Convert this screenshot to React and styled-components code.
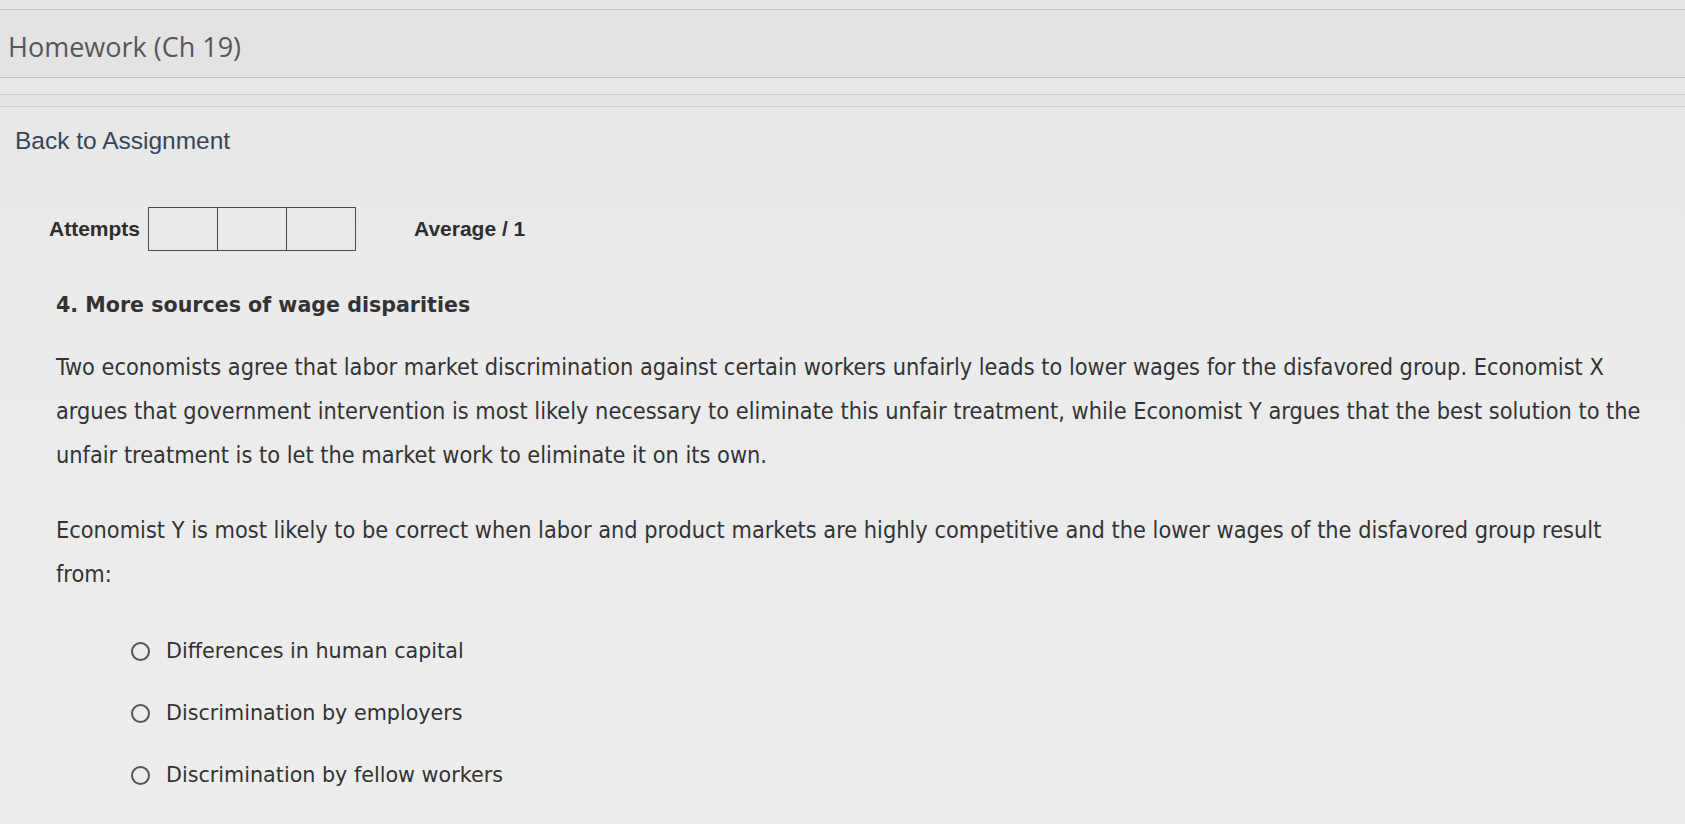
import React from "react";
import styled, { createGlobalStyle } from "styled-components";

const Global = createGlobalStyle`
  html, body { margin: 0; padding: 0; }
  body { background: #eaeaea; width: 1685px; height: 824px; overflow: hidden; }
`;

const Page = styled.div`
  width: 1685px;
  height: 824px;
  background: linear-gradient(180deg, #e6e6e6 0%, #ebebeb 40%, #ededed 100%);
  padding-top: 9px;
  box-sizing: border-box;
`;

const Header = styled.header`
  height: 69px;
  border-top: 1px solid #c9c9c9;
  border-bottom: 1px solid #c4c4c4;
  background: #e3e3e3;
  display: flex;
  align-items: center;
  padding: 6px 0 0 8px;
  box-sizing: border-box;
  font-family: "Open Sans", "Noto Sans", sans-serif;
  font-size: 27px;
  color: #575757;
`;

const Rule = styled.div`
  height: 0;
  border-top: 1px solid #cdcdcd;
  margin-top: ${(p) => p.$gap}px;
`;

const Band = styled.div`
  height: 11px;
  background: #e4e4e4;
`;

const Content = styled.main`
  padding: 19px 0 0 15px;
`;

const BackLink = styled.a`
  display: block;
  font-family: "Liberation Sans", Arial, sans-serif;
  font-size: 24.5px;
  line-height: 30px;
  color: #34475a;
  text-decoration: none;
`;

const AttemptsRow = styled.div`
  display: flex;
  align-items: center;
  margin: 51px 0 0 34px;
  font-family: "Liberation Sans", Arial, sans-serif;
  font-weight: bold;
  font-size: 21px;
  color: #2e2e2e;
`;

const Boxes = styled.div`
  display: flex;
  margin-left: 8px;
  border: 1px solid #4a4a4a;
`;

const Cell = styled.div`
  width: 68px;
  height: 42px;
  border-left: ${(p) => (p.$first ? "none" : "1px solid #4a4a4a")};
`;

const Average = styled.span`
  margin-left: 58px;
`;

const Question = styled.section`
  margin: 41px 0 0 41px;
  color: #333;
`;

const Title = styled.h2`
  margin: 0;
  font-family: "DejaVu Sans", Verdana, sans-serif;
  font-weight: bold;
  font-size: 20.6px;
  line-height: 26px;
  color: #333;
`;

const Para = styled.p`
  margin: ${(p) => p.$top}px 0 0 0;
  width: 1595px;
  font-family: "DejaVu Sans Condensed", "DejaVu Sans", sans-serif;
  font-stretch: condensed;
  font-size: 23.3px;
  line-height: 44px;
  color: #333;
`;

const Options = styled.div`
  margin: 44px 0 0 116px;
  display: flex;
  flex-direction: column;
  gap: 40px;
`;

const Option = styled.label`
  display: flex;
  align-items: center;
  font-family: "DejaVu Sans", Verdana, sans-serif;
  font-size: 20.7px;
  line-height: 22px;
  color: #333;
`;

const Radio = styled.span`
  width: 15px;
  height: 15px;
  border: 2px solid #555;
  border-radius: 50%;
  margin-right: 16px;
  flex: none;
`;

export default function App() {
  const options = [
    "Differences in human capital",
    "Discrimination by employers",
    "Discrimination by fellow workers",
  ];
  return (
    <>
      <Global />
      <Page>
        <Header>Homework (Ch 19)</Header>
        <Rule $gap={16} />
        <Band />
        <Rule $gap={0} />
        <Content>
          <BackLink href="#">Back to Assignment</BackLink>
          <AttemptsRow>
            Attempts
            <Boxes>
              <Cell $first />
              <Cell />
              <Cell />
            </Boxes>
            <Average>Average / 1</Average>
          </AttemptsRow>
          <Question>
            <Title>4. More sources of wage disparities</Title>
            <Para $top={27}>
              Two economists agree that labor market discrimination against certain workers unfairly leads to lower wages for the disfavored group. Economist X argues that government intervention is most likely necessary to eliminate this unfair treatment, while Economist Y argues that the best solution to the unfair treatment is to let the market work to eliminate it on its own.
            </Para>
            <Para $top={31}>
              Economist Y is most likely to be correct when labor and product markets are highly competitive and the lower wages of the disfavored group result from:
            </Para>
          </Question>
          <Options>
            {options.map((o) => (
              <Option key={o}>
                <Radio />
                {o}
              </Option>
            ))}
          </Options>
        </Content>
      </Page>
    </>
  );
}
